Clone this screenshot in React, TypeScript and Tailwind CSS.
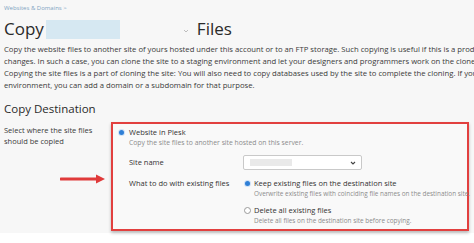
import React from "react";

function Radio({ checked }: { checked: boolean }) {
  return checked ? (
    <span className="inline-flex h-[7px] w-[7px] shrink-0 items-center justify-center rounded-full bg-[#cfe2f7]">
      <span className="h-[5px] w-[5px] rounded-full bg-[#2f7fd6]" />
    </span>
  ) : (
    <span className="h-[7px] w-[7px] shrink-0 rounded-full border border-[#9a9a9a] bg-white" />
  );
}

export default function App() {
  return (
    <div
      className="h-[243px] w-[474px] overflow-hidden bg-white text-[#333]"
      style={{ fontFamily: '"Open Sans", "Noto Sans", sans-serif' }}
    >
      <div className="h-[233px] w-[620px] bg-[#f7f7f7] px-[4px] pt-[4px]">
        <div className="text-[6px] leading-[9px] text-[#7ea3c2]">Websites &amp; Domains &gt;</div>
        <div className="mt-[4px] flex h-[24px] items-center">
          <span className="text-[17px] leading-[24px] text-[#2a2a2a]">Copy</span>
          <span className="ml-[2px] h-[19px] w-[74px] bg-[#d6e8f2]" />
          <svg className="ml-[63px] mt-[4px]" width="6" height="4" viewBox="0 0 6 4">
            <path d="M1 1 L3 3 L5 1" fill="none" stroke="#b5b5b5" strokeWidth="0.9" />
          </svg>
          <span className="ml-[8px] text-[17px] leading-[24px] text-[#2a2a2a]">Files</span>
        </div>
        <div className="mt-[2px] text-[7.7px] leading-[12px] text-[#3a3a3a]">
          <div className="whitespace-nowrap">
            Copy the website files to another site of yours hosted under this account or to an FTP storage. Such copying is useful if this is a production website and you want to test some
          </div>
          <div className="whitespace-nowrap">
            changes. In such a case, you can clone the site to a staging environment and let your designers and programmers work on the clone without affecting the production site.
          </div>
          <div className="whitespace-nowrap">
            Copying the site files is a part of cloning the site: You will also need to copy databases used by the site to complete the cloning. If you do not have a staging
          </div>
          <div className="whitespace-nowrap">
            environment, you can add a domain or a subdomain for that purpose.
          </div>
        </div>
        <div className="mt-[10px] text-[11.5px] leading-[16px] text-[#2a2a2a]">Copy Destination</div>
        <div className="mt-[5px] flex">
          <div className="relative w-[107px] shrink-0 pt-[3px] text-[7.5px] leading-[11px] text-[#3a3a3a]">
            <div>Select where the site files</div>
            <div>should be copied</div>
            <svg className="absolute left-[56px] top-[52px]" width="46" height="10" viewBox="0 0 46 10">
              <line x1="1" y1="5" x2="38" y2="5" stroke="#e03a3a" strokeWidth="3" strokeLinecap="round" />
              <path d="M36 0.5 L45 5 L36 9.5 Z" fill="#e03a3a" />
            </svg>
          </div>
          <div className="h-[109px] w-[358px] shrink-0 border-2 border-[#e2403f] bg-[#f9f9f9] pl-[5px] pt-[3px] shadow-[0_2px_3px_rgba(0,0,0,0.25)]">
            <div className="flex items-center gap-[4px] text-[7.5px] leading-[11px] text-[#333]">
              <Radio checked />
              <span>Website in Plesk</span>
            </div>
            <div className="pl-[11px] text-[6.8px] leading-[10px] text-[#8c8c8c]">
              Copy the site files to another site hosted on this server.
            </div>
            <div className="mt-[7px] flex items-center pl-[11px]">
              <div className="w-[114px] shrink-0 text-[7.5px] leading-[11px] text-[#333]">Site name</div>
              <div className="flex h-[15px] w-[119px] shrink-0 items-center justify-between rounded-[2px] border border-[#c9c9c9] bg-white pl-[6px] pr-[5px]">
                <span className="h-[7px] w-[42px] bg-[#e9e9e9]" />
                <svg width="6" height="4" viewBox="0 0 6 4">
                  <path d="M1 1 L3 3 L5 1" fill="none" stroke="#444" strokeWidth="1.1" />
                </svg>
              </div>
            </div>
            <div className="mt-[8px] flex pl-[11px]">
              <div className="w-[114px] shrink-0 whitespace-nowrap text-[7.5px] leading-[11px] text-[#333]">What to do with existing files</div>
              <div className="whitespace-nowrap pl-[1px]">
                <div className="flex items-center gap-[3px] text-[7.5px] leading-[11px] text-[#333]">
                  <Radio checked />
                  <span>Keep existing files on the destination site</span>
                </div>
                <div className="pl-[10px] text-[6.4px] leading-[10px] text-[#8c8c8c]">
                  Overwrite existing files with coinciding file names on the destination site.
                </div>
                <div className="mt-[6px] flex items-center gap-[3px] text-[7.5px] leading-[11px] text-[#333]">
                  <Radio checked={false} />
                  <span>Delete all existing files</span>
                </div>
                <div className="pl-[10px] text-[6.4px] leading-[10px] text-[#8c8c8c]">
                  Delete all files on the destination site before copying.
                </div>
              </div>
            </div>
          </div>
        </div>
      </div>
    </div>
  );
}
